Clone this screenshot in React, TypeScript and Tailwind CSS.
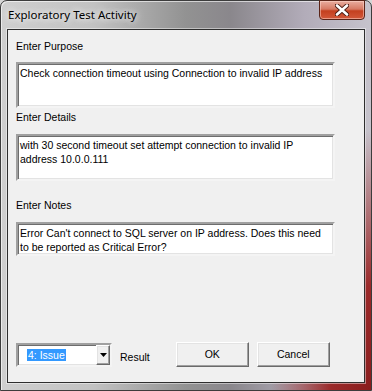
import React from 'react'

const sunken =
  'border-2 border-t-[#a0a0a0] border-l-[#a0a0a0] border-b-[#f4f4f4] border-r-[#f4f4f4] shadow-[inset_1px_1px_0_#6d6d6d,inset_-1px_-1px_0_#e3e3e3]'

const raised =
  'border border-t-[#ffffff] border-l-[#ffffff] border-b-[#6a6a6a] border-r-[#6a6a6a] shadow-[inset_-1px_-1px_0_#a0a0a0,inset_1px_1px_0_#e3e3e3] bg-[#f0f0f0]'

const Field: React.FC<{ label: string; text: string; height: string; labelTop: string; boxTop: string }> = ({
  label,
  text,
  height,
  labelTop,
  boxTop,
}) => (
  <div>
    <div className={`${labelTop} ml-[8px] h-[14px] leading-[14px]`}>{label}</div>
    <div className={`${boxTop} ${sunken} ${height} ml-[8px] w-[319px] bg-white px-[2px] pt-[2px] leading-[14px]`}>
      {text}
    </div>
  </div>
)

const App: React.FC = () => {
  return (
    <div className="w-[372px] h-[391px] overflow-hidden bg-[#d6d6d6]">
      <div
        className="relative w-[372px] h-[391px] rounded-t-[7px] border border-[#3c3c3c] bg-[radial-gradient(ellipse_100px_260px_at_100%_100%,#8a1d1d_0%,#9b2a2a_40%,rgba(150,40,40,0)_100%),linear-gradient(to_right,#cfcfcf_0%,#c2c2c2_25%,#929292_50%,#8a878c_62%,#b2acb9_82%,#c6c3cc_100%)] shadow-[inset_1px_1px_0_rgba(255,255,255,0.6)]"
        style={{ fontFamily: '"Liberation Sans", Arial, sans-serif' }}
      >
        {/* title bar */}
        <div className="flex h-[28px] items-start">
          <div
            className="ml-[7px] mt-[6px] text-[11.5px] leading-[16px] text-black [text-shadow:0_0_6px_#ffffff,0_0_10px_rgba(255,255,255,0.8)]"
            style={{ fontFamily: '"Noto Sans", "Open Sans", sans-serif' }}
          >
            Exploratory Test Activity
          </div>
          <div className="ml-auto mr-[6px] mt-[-1px] flex h-[20px] w-[46px] items-center justify-center rounded-b-[4px] border border-[#5a2418] bg-[linear-gradient(to_bottom,#e9ad9f_0%,#d67a64_45%,#c4401f_55%,#d2583a_100%)] shadow-[inset_0_0_0_1px_rgba(255,220,210,0.5)]">
            <svg width="14" height="12" viewBox="0 0 14 12">
              <path
                d="M2 1.5 L12 10.5 M12 1.5 L2 10.5"
                stroke="#4a1a12"
                strokeWidth="4.4"
                strokeLinecap="round"
              />
              <path d="M2 1.5 L12 10.5 M12 1.5 L2 10.5" stroke="#ffffff" strokeWidth="2.6" strokeLinecap="round" />
            </svg>
          </div>
        </div>

        {/* client area */}
        <div className="ml-[6px] w-[358px] h-[354px] border border-[#2e2e2e] bg-[#f0f0f0] text-[10.5px] text-black shadow-[0_0_0_1px_rgba(255,255,255,0.45)]">
          <Field label="Enter Purpose" text="Check connection timeout using Connection to invalid IP address" height="h-[46px]" labelTop="mt-[9px]" boxTop="mt-[9px]" />
          <Field
            label="Enter Details"
            text="with 30 second timeout set attempt connection to invalid IP address 10.0.0.111"
            height="h-[47px]"
            labelTop="mt-[2px]"
            boxTop="mt-[10px]"
          />
          <Field
            label="Enter Notes"
            text="Error Can't connect to SQL server on IP address. Does this need to be reported as Critical Error?"
            height="h-[34px]"
            labelTop="mt-[17px]"
            boxTop="mt-[10px]"
          />

          <div className="mt-[86px] ml-[8px] flex items-start">
            <div className={`${sunken} mt-[1px] flex h-[24px] w-[96px] items-center bg-white`}>
              <span className="ml-[9px] bg-[#3399ff] px-[1px] leading-[12px] text-white">4: Issue</span>
              <div className={`${raised} ml-auto flex h-[20px] w-[14px] items-center justify-center`}>
                <svg width="7" height="4" viewBox="0 0 7 4">
                  <path d="M0 0 H7 L3.5 4 Z" fill="#000" />
                </svg>
              </div>
            </div>
            <div className="ml-[8px] mt-[8px] leading-[14px]">Result</div>
            <button className={`${raised} ml-[26px] h-[25px] w-[73px] text-[10.5px]`}>OK</button>
            <button className={`${raised} ml-[8px] h-[25px] w-[73px] text-[10.5px]`}>Cancel</button>
          </div>
        </div>
      </div>
    </div>
  )
}

export default App
